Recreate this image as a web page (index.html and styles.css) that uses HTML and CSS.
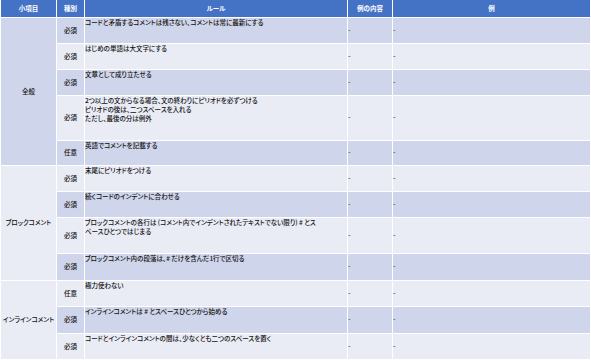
FILE: index.html
```html
<!DOCTYPE html>
<html lang="ja">
<head>
<meta charset="utf-8">
<link rel="stylesheet" href="styles.css">
</head>
<body>
<div class="frame">
<table class="rules">
  <colgroup>
    <col class="c-group">
    <col class="c-kind">
    <col class="c-rule">
    <col class="c-ex">
    <col class="c-sample">
  </colgroup>
  <thead>
    <tr class="h-head">
      <th>小項目</th>
      <th>種別</th>
      <th>ルール</th>
      <th>例の内容</th>
      <th>例</th>
    </tr>
  </thead>
  <tbody>
    <tr class="dark h26">
      <td class="group dark" rowspan="5">全般</td>
      <td class="kind">必須</td>
      <td class="rule">コードと矛盾するコメントは残さない、コメントは常に最新にする</td>
      <td class="ex">-</td>
      <td class="sample">-</td>
    </tr>
    <tr class="light h26">
      <td class="kind">必須</td>
      <td class="rule">はじめの単語は大文字にする</td>
      <td class="ex">-</td>
      <td class="sample">-</td>
    </tr>
    <tr class="dark h26">
      <td class="kind">必須</td>
      <td class="rule">文章として成り立たせる</td>
      <td class="ex">-</td>
      <td class="sample">-</td>
    </tr>
    <tr class="light h45">
      <td class="kind">必須</td>
      <td class="rule">2つ以上の文からなる場合、文の終わりにピリオドを必ずつける<br>ピリオドの後は、二つスペースを入れる<br>ただし、最後の分は例外</td>
      <td class="ex">-</td>
      <td class="sample">-</td>
    </tr>
    <tr class="dark h25">
      <td class="kind">任意</td>
      <td class="rule">英語でコメントを記載する</td>
      <td class="ex">-</td>
      <td class="sample">-</td>
    </tr>
    <tr class="light h26">
      <td class="group light" rowspan="4">ブロックコメント</td>
      <td class="kind">必須</td>
      <td class="rule">末尾にピリオドをつける</td>
      <td class="ex">-</td>
      <td class="sample">-</td>
    </tr>
    <tr class="dark h26">
      <td class="kind">必須</td>
      <td class="rule">続くコードのインデントに合わせる</td>
      <td class="ex">-</td>
      <td class="sample">-</td>
    </tr>
    <tr class="light h36">
      <td class="kind">必須</td>
      <td class="rule">ブロックコメントの各行は (コメント内でインデントされたテキストでない限り) # とス<br>ペースひとつではじまる</td>
      <td class="ex">-</td>
      <td class="sample">-</td>
    </tr>
    <tr class="dark h27">
      <td class="kind">必須</td>
      <td class="rule">ブロックコメント内の段落は、# だけを含んだ1行で区切る</td>
      <td class="ex">-</td>
      <td class="sample">-</td>
    </tr>
    <tr class="light h26">
      <td class="group light" rowspan="3">インラインコメント</td>
      <td class="kind">任意</td>
      <td class="rule">極力使わない</td>
      <td class="ex">-</td>
      <td class="sample">-</td>
    </tr>
    <tr class="dark h27">
      <td class="kind">必須</td>
      <td class="rule">インラインコメントは # とスペースひとつから始める</td>
      <td class="ex">-</td>
      <td class="sample">-</td>
    </tr>
    <tr class="light h26">
      <td class="kind">必須</td>
      <td class="rule">コードとインラインコメントの間は、少なくとも二つのスペースを置く</td>
      <td class="ex">-</td>
      <td class="sample">-</td>
    </tr>
  </tbody>
</table>
</div>
</body>
</html>
```

FILE: styles.css
```css
html, body {
  margin: 0;
  padding: 0;
  background: #ffffff;
}

.frame {
  width: 591px;
  height: 360px;
  overflow: hidden;
  display: flex;
}

.frame::after {
  content: "";
  width: 1px;
  height: 100%;
  background: #8c8c8c;
}

.rules {
  width: 590px;
  flex: none;
  border-collapse: collapse;
  table-layout: fixed;
  font-family: "Noto Sans CJK JP", "Noto Sans", sans-serif;
  font-size: 6.5px;
  line-height: 9px;
  font-weight: 500;
  color: #111111;
  font-feature-settings: "palt";
}

.c-group { width: 56px; }
.c-kind { width: 28px; }
.c-rule { width: 263px; }
.c-ex { width: 45px; }
.c-sample { width: 198px; }

.rules th,
.rules td {
  border: 1px solid #ffffff;
  padding: 0;
  overflow: hidden;
  white-space: nowrap;
}

.rules th {
  background: #4472c4;
  color: #ffffff;
  font-weight: 700;
  text-align: center;
  vertical-align: middle;
  border-color: #ffffff;
  border-top: none;
  border-left-color: rgba(255,255,255,0.6);
  border-right-color: rgba(255,255,255,0.6);
}

.h-head { height: 17px; }
.h25 { height: 25px; }
.h26 { height: 26px; }
.h27 { height: 27px; }
.h36 { height: 36px; }
.h45 { height: 45px; }

.dark td { background: #cfd5ea; }
.light td { background: #e9ebf5; }
.rules td.group.dark { background: #cfd5ea; }
.rules td.group.light { background: #e9ebf5; }

.group {
  text-align: center;
  vertical-align: middle;
  border-left: none;
}

.kind {
  text-align: center;
  vertical-align: middle;
}

.rule {
  vertical-align: top;
  text-align: left;
  padding: 1px 0 0 2px;
}

.ex,
.sample {
  vertical-align: middle;
  text-align: left;
  color: #6a6a6a;
  font-size: 7px;
  font-weight: 700;
}

.ex { padding-left: 2px; }
.sample { padding-left: 1px; }
```
